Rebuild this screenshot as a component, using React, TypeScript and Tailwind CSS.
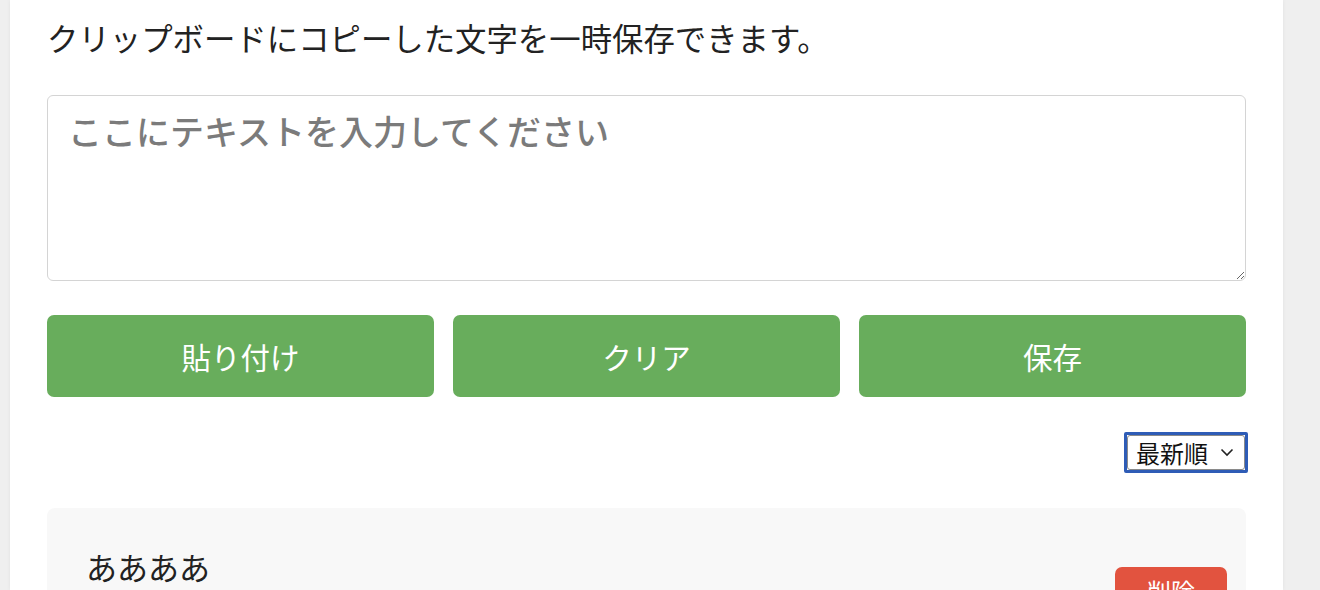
const JP = "font-['Noto_Sans_CJK_JP','Noto_Sans',sans-serif]";

const actions = ["貼り付け", "クリア", "保存"];

const ClipItem = ({ text }: { text: string }) => (
  <div className="flex justify-between rounded-lg bg-[#f8f8f8] pl-[39px] pr-[19px] pt-[36px] pb-6">
    <div className="text-[31px] leading-[45px] text-[#222]">{text}</div>
    <button className="mt-[23px] h-[48px] self-start rounded-[7px] bg-[#e2533f] px-[32px] text-[24px] leading-[48px] text-white">
      削除
    </button>
  </div>
);

export default function App() {
  return (
    <div className={`min-h-screen bg-[#efefef] pl-[10px] pr-[37px] ${JP}`}>
      <div className="h-[590px] overflow-hidden bg-white px-[37px] pt-[15px] shadow-[0_0_4px_rgba(0,0,0,0.06)]">
        <p className="text-[31.4px] leading-[46px] text-[#222]">
          クリップボードにコピーした文字を一時保存できます。
        </p>

        <textarea
          className="mt-[34px] block h-[186px] w-full resize-y rounded-[6px] border border-[#d4d4d4] px-[20px] pt-[11px] text-[34px] font-medium leading-[48px] text-[#222] outline-none placeholder:text-[#7b7b7b]"
          placeholder="ここにテキストを入力してください"
        />

        <div className="mt-[34px] grid grid-cols-3 gap-[19px]">
          {actions.map((label) => (
            <button
              key={label}
              className="h-[82px] rounded-[7px] bg-[#68ad5c] text-[29.5px] text-white"
            >
              {label}
            </button>
          ))}
        </div>

        <div className="mt-[35px] flex justify-end">
          <div className="-mr-[2px] flex h-[41px] items-center rounded-[2px] border-[3px] border-[#2e5cb6] bg-white">
            <div className="flex h-full items-center gap-[12px] rounded-[3px] border border-[#8a8a8a] pl-[8px] pr-[10px]">
              <span className="text-[24px] leading-none text-[#111]">最新順</span>
              <svg width="14" height="9" viewBox="0 0 14 9" fill="none">
                <path d="M1.5 1.5 7 7l5.5-5.5" stroke="#222" strokeWidth="1.6" />
              </svg>
            </div>
          </div>
        </div>

        <div className="mt-[35px]">
          <ClipItem text="ああああ" />
        </div>
      </div>
    </div>
  );
}
